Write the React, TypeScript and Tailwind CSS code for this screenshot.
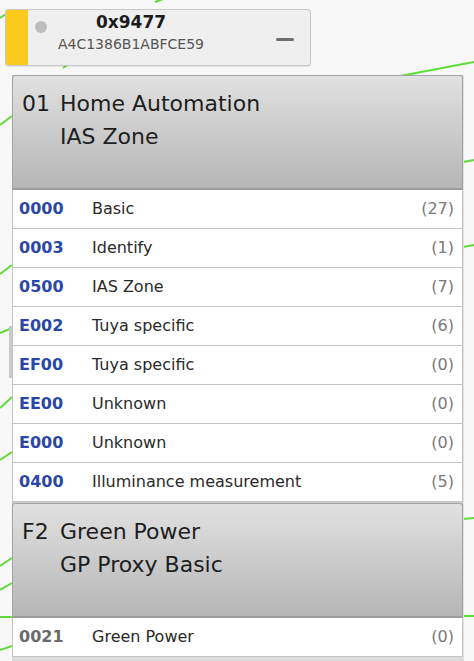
import React from "react";

type Cluster = { id: string; name: string; count: number; muted?: boolean };

const endpoints: { ep: string; profile: string; device: string; clusters: Cluster[] }[] = [
  {
    ep: "01",
    profile: "Home Automation",
    device: "IAS Zone",
    clusters: [
      { id: "0000", name: "Basic", count: 27 },
      { id: "0003", name: "Identify", count: 1 },
      { id: "0500", name: "IAS Zone", count: 7 },
      { id: "E002", name: "Tuya specific", count: 6 },
      { id: "EF00", name: "Tuya specific", count: 0 },
      { id: "EE00", name: "Unknown", count: 0 },
      { id: "E000", name: "Unknown", count: 0 },
      { id: "0400", name: "Illuminance measurement", count: 5 },
    ],
  },
  {
    ep: "F2",
    profile: "Green Power",
    device: "GP Proxy Basic",
    clusters: [{ id: "0021", name: "Green Power", count: 0, muted: true }],
  },
];

// links to other nodes on the canvas behind the panel
const links = [
  "M0 18 L6 14",
  "M155 2 L172 -4",
  "M63 68 L75 60",
  "M400 76 L474 62",
  "M0 125 L12 116",
  "M463 162 L474 160",
  "M463 247 L474 245",
  "M0 274 L12 265",
  "M0 333 L12 328",
  "M0 408 L12 397",
  "M0 460 L12 452",
  "M0 566 L12 558",
  "M0 590 L12 583",
  "M0 617 L12 617",
  "M0 650 L12 646",
  "M463 519 L474 518",
  "M463 616 L474 616",
];

function NodeCard() {
  return (
    <div className="ml-[5px] flex h-[57px] w-[306px] overflow-hidden rounded-[3px] border border-[#c9c9c9] bg-[#efefef] shadow-[0_1px_1px_rgba(0,0,0,0.08)]">
      <div className="w-[22px] shrink-0 bg-[#fcca1d]" />
      <div className="w-[19px] shrink-0 pl-[7px] pt-[11px]">
        <div className="h-3 w-3 rounded-full bg-[#bdbdbd]" />
      </div>
      <div className="flex w-[168px] flex-col items-center pt-[1px]">
        <div className="text-[17px] font-bold leading-[22px] text-[#1c1c1c]">0x9477</div>
        <div className="text-[14px] leading-[22px] text-[#555]">A4C1386B1ABFCE59</div>
      </div>
      <div className="flex flex-1 items-start justify-end pr-[16px] pt-[28px]">
        <div className="h-[3px] w-[18px] rounded-sm bg-[#6f6f6f]" />
      </div>
    </div>
  );
}

function Header({ ep, profile, device }: { ep: string; profile: string; device: string }) {
  return (
    <div className="h-[115px] rounded-t-[3px] border border-b-2 border-[#a3a3a3] border-b-[#9c9c9c] bg-linear-to-b from-[#e1e1e1] to-[#b6b6b6] pt-[11px] pl-[9px] text-[22px] leading-[33px] text-[#1e1e1e]">
      <div className="grid grid-cols-[38px_1fr]">
        <span>{ep}</span>
        <span>{profile}</span>
        <span />
        <span>{device}</span>
      </div>
    </div>
  );
}

function Row({ c }: { c: Cluster }) {
  return (
    <div className="flex h-[39px] items-center border-x border-b border-[#c5c5c5] bg-white pl-[6px] pr-[8px] text-[16px]">
      <span className={`w-[73px] font-bold ${c.muted ? "text-[#6a6a6a]" : "text-[#2a47a8]"}`}>{c.id}</span>
      <span className="flex-1 text-[#2a2a2a]">{c.name}</span>
      <span className="text-[#7a7a7a]">({c.count})</span>
    </div>
  );
}

export default function App() {
  return (
    <div
      className="relative h-[661px] w-[474px] overflow-hidden bg-[#f8f8f8]"
      style={{ fontFamily: '"DejaVu Sans", Verdana, sans-serif' }}
    >
      <svg className="absolute inset-0" width="474" height="661">
        {links.map((d, i) => (
          <path key={i} d={d} stroke="#5fdc3a" strokeWidth="2" fill="none" />
        ))}
        <rect x="9" y="326" width="3" height="52" fill="#c9c9c9" />
      </svg>

      <div className="relative pt-[9px]">
        <NodeCard />
        <div className="ml-[12px] mt-[9px] w-[451px] bg-[#cdcdcd] shadow-[1px_0_0_#e0e0e0]">
          {endpoints.map((e, i) => (
            <div key={e.ep} className={i > 0 ? "pt-[1px]" : ""}>
              <Header ep={e.ep} profile={e.profile} device={e.device} />
              {e.clusters.map((c) => (
                <Row key={c.id} c={c} />
              ))}
            </div>
          ))}
          <div className="h-[10px] bg-[#dcdcdc]" />
        </div>
      </div>
    </div>
  );
}
